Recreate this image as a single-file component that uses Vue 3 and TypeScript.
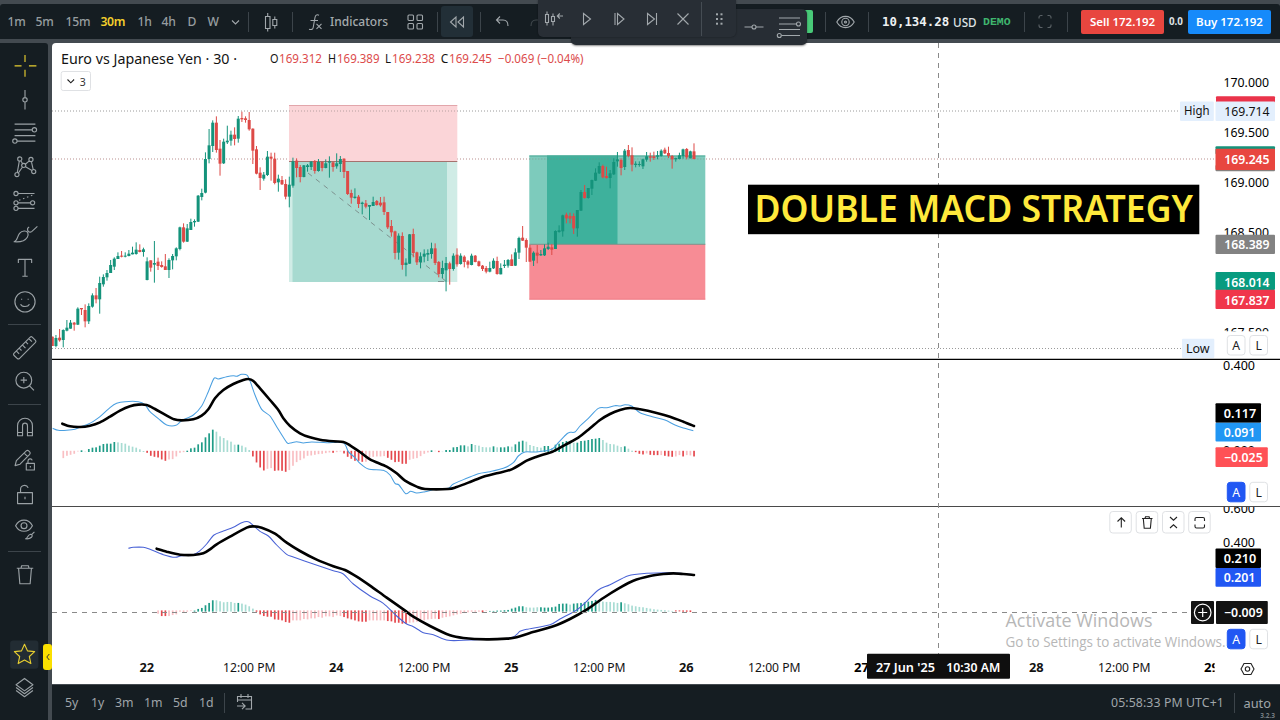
<script setup lang="ts">
type Pt = [number, number]
type Label = { t: string; x: number; y: number; w: number; s?: number; f?: string; b?: number }

// Chart data is stored in thirds of a pixel.
const U = 3
const step = 3.646
const x0 = 52.3
const barX = (i: number) => x0 + step * i

// direction, body top, body bottom, wick top, wick bottom
const rawCandles = `D740,768,740,768 U744,768,735,772 D743,751,717,755 U720,750,718,772 U713,722,690,724 U698,716,690,716 D698,704,696,722 U656,704,652,705 D654,658,654,675 D660,694,643,712
U648,694,640,702 U616,650,610,653 D616,628,594,640 U579,628,560,671 U561,583,553,590 U549,562,540,572 U525,549,510,549 U506,530,502,540 U498,507,487,507 D497,500,483,502
U497,500,487,502 U491,498,480,499 U488,493,470,493 U479,492,457,494 D480,486,463,487 U478,486,473,500 U514,570,502,571 D511,533,511,545 U519,524,453,578 D515,528,503,540
D525,531,514,533 D529,540,492,540 U510,540,505,564 U498,511,492,538 U475,499,472,511 U412,477,410,481 D412,455,400,458 U415,455,402,456 U396,420,386,420 U393,397,388,410
U317,395,315,396 U309,321,296,331 U207,308,187,310 U166,207,117,220 U98,168,91,186 D98,180,79,188 D176,221,150,257 U155,220,146,222 U152,157,107,162 U134,152,122,167
D134,147,112,166 U86,146,78,158 D84,88,65,96 D85,90,79,98 D90,118,66,122 D116,182,115,222 D178,251,168,253 D248,264,232,300 U254,266,246,272 U200,255,183,258
D200,206,188,272 D206,279,188,283 U266,277,254,305 D270,283,258,285 D282,320,268,328 U284,320,260,352 U214,287,203,293 D212,234,205,262 D231,261,225,277 U226,261,225,262
U226,231,222,245 U215,231,213,240 D213,243,210,251 U216,243,207,245 D216,234,215,244 U220,234,208,235 U214,218,199,263 D217,231,215,245 U220,229,190,236 U207,222,198,246
D206,246,205,264 D243,312,243,315 D309,323,299,341 U320,324,295,326 D320,342,315,354 U338,342,335,373 D340,350,330,355 U345,350,345,390 U336,348,320,348 D333,345,330,347
D338,346,321,350 D337,366,320,375 D366,412,366,417 D408,427,390,440 D424,489,422,508 U437,488,430,509 D438,525,427,539 U518,525,505,559 U433,521,432,522 D432,489,416,502
D487,517,485,525 U499,517,487,535 U491,500,478,517 U489,494,478,513 U475,492,458,506 D475,519,460,525 D516,552,513,562 U534,552,512,564 U519,541,501,604 D520,537,515,584
U497,537,490,542 D494,523,475,530 U497,522,490,524 D500,516,496,532 D514,524,510,535 U497,525,491,526 D497,516,495,517 D514,528,512,530 D527,537,525,543 D534,545,528,550
U534,545,515,547 U512,535,505,537 D513,552,500,554 U534,553,520,553 U524,528,510,534 U510,527,507,533 D508,528,493,528 U487,527,475,528 U444,488,440,507 D443,452,408,453
D450,473,445,516 D473,515,465,515 U488,512,484,528 D488,497,465,520 U492,496,480,498 U475,496,463,498 U470,477,458,480 D472,479,462,495 U423,477,421,477 U421,426,406,428
U376,424,374,440 D374,385,368,400 D378,386,368,400 D378,415,370,432 U360,415,360,440 U306,362,300,363 D306,324,285,326 U294,324,294,326 U270,296,269,315 U248,272,235,273
U228,250,217,252 D228,262,224,265 D258,264,230,266 U250,264,240,295 U216,253,205,255 U208,214,186,230 D210,234,205,256 U182,231,177,240 D180,198,165,202 D196,224,172,244
U221,225,214,232 U222,225,214,230 U208,229,206,237 U199,209,186,215 D199,203,188,215 D199,204,185,210 U196,200,183,208 U182,198,178,200 D179,190,173,192 D189,198,170,204
D198,208,195,236 U204,208,203,215 U196,207,188,208 U178,198,176,206 D177,202,174,208 U184,205,182,205 D184,207,160,208`
const candles = rawCandles.split(/\s+/).map((c, i) => {
  const [a, b, h, l] = c.slice(1).split(',').map((n) => 90 + Number(n) / U)
  return { x: barX(i), fill: c[0] === 'U' ? '#14937b' : '#dd4a47', a, b, h, l }
})

// Histogram bars: an asterisk marks a bar that extends the move (strong tint).
function histogram(first: number, base: number, raw: string) {
  return raw.split(/\s+/).map((s, k) => {
    const strong = s.endsWith('*')
    const v = parseInt(s) / U
    const fill = v >= 0 ? (strong ? '#1f9c87' : '#a8dcd3') : strong ? '#e5484d' : '#f9bfc3'
    return { x: barX(first + k), y: v >= 0 ? base + 0.6 - v : base - 0.6, h: Math.max(0.4, Math.abs(v)), fill }
  })
}
const hist1 = histogram(3, 451.4, `-22 -15 -12 -9 -2 5* 1 9* 13* 14* 19* 24* 25* 25* 30* 29 27 25 19 16 13 8 3 -6* -15* -18* -20* -26* -30* -26 -25 -17 -6 -4 4* 11* 13* 23* 29* 44* 56* 67* 61 47 42 35 31 22 22* 19 14 6 -17* -35* -50* -59* -54 -52 -60* -59* -60* -63* -58 -45 -34 -28 -23 -15 -14 -12 -10 -9 -7 -5 -6* -4 -2 -8* -18* -24* -30* -30* -33* -33 -20 -18 -17 -17 -16 -21* -27* -34* -33* -39* -39* -27 -24 -22 -16 -9 -5 5* -1 -4* 1 6* 6* 14* 15* 20* 20* 17 24* 21 19 15 14 14 17* 14 14* 14* 17* 16 23* 31* 34* 31 21 18 15 13 18* 18* 12 22* 25* 30* 33* 29 28 28* 33* 34* 36* 39* 40* 42* 36 28 24 23 19 15 17* 10 4 -4* -9* -11* -8 -12* -13* -13* -13 -15* -17* -18* -17 -13 -17* -13 -14 -17*`)
const hist2 = histogram(29, 611, `-10 -17* -17* -17 -14 -12 -4 -6 -4 -2 3* 8* 11* 19* 26* 34* 34 31 28 29 29 26 26* 24 21 16 9 -4* -12* -17* -19* -19* -27* -28* -30* -35* -37* -30 -30 -30 -26 -27 -24 -24 -20 -22 -18 -18 -20 -15 -17 -20* -24* -27* -30* -33* -34* -34* -30 -30 -30 -30 -30 -32* -33* -37* -37* -40* -40* -37 -36 -34 -32 -30 -27 -26 -25 -26* -22 -20 -18 -15 -12 -10 -8 -6 -4 -4 -4 -6* -2 2* 2* 3* 3* 4* 5* 9* 12* 16* 16* 13 12 12 13 13* 12* 12* 13* 15* 23* 24* 24* 21 24* 25* 26* 28* 30* 32* 35* 31 30 29 29 28 26 28* 25 22 18 16 14 13 11 9 7 6 5 4 3 2 -3* -3* -4* -4* -5*`)

const pts = (s: string): Pt[] => s.trim().split(/\s+/).map((p) => {
  const [a, b] = p.split(',').map(Number)
  return [50 + a / U, 360 + b / U] as Pt
})
function smooth(s: string) {
  const p = pts(s)
  let d = `M${p[0][0].toFixed(2)} ${p[0][1].toFixed(2)}`
  for (let i = 0; i < p.length - 1; i++) {
    const a = p[i - 1] ?? p[i], b = p[i], c = p[i + 1], e = p[i + 2] ?? c
    const k = 7
    d += `C${[b[0] + (c[0] - a[0]) / k, b[1] + (c[1] - a[1]) / k, c[0] - (e[0] - b[0]) / k, c[1] - (e[1] - b[1]) / k, c[0], c[1]].map((n) => n.toFixed(2)).join(' ')}`
  }
  return d
}
const fast1 = smooth('8,205 25,211 50,211 75,208 90,201 115,192 130,184 150,170 180,143 200,130 225,125 265,125 285,134 300,155 330,180 350,195 378,196 395,182 430,165 455,138 475,95 492,55 505,57 530,50 550,47 560,49 575,43 592,46 602,68 615,105 635,148 660,168 680,200 710,247 720,249 740,245 760,249 785,246 830,248 880,248 895,275 915,293 930,310 955,327 1000,331 1020,345 1035,370 1047,375 1067,401 1082,394 1100,399 1125,395 1160,387 1195,385 1210,372 1250,355 1285,341 1320,335 1360,325 1390,308 1405,288 1425,276 1460,276 1505,268 1525,248 1550,222 1560,217 1575,216 1590,198 1615,175 1645,145 1670,143 1695,137 1710,138 1725,134 1745,138 1770,158 1810,171 1845,180 1875,195 1900,204 1930,212')
const slow1 = smooth('37,191 60,199 90,201 120,197 150,187 180,170 210,152 240,139 265,134 290,135 315,147 345,164 372,178 395,181 430,178 455,167 475,148 495,115 520,90 550,72 580,60 595,57 610,63 630,85 660,120 685,150 700,175 720,198 750,220 780,232 810,239 850,244 880,246 900,256 930,276 960,298 1010,320 1040,340 1065,362 1100,380 1125,387 1195,387 1220,381 1260,366 1300,350 1340,340 1385,328 1430,302 1460,290 1510,274 1550,252 1585,233 1620,205 1650,180 1680,162 1710,150 1740,144 1770,148 1820,159 1860,170 1900,185 1932,198')
const fast2 = smooth('235,565 250,562 280,562 300,568 340,584 375,592 395,587 430,584 450,572 470,552 492,525 520,513 550,502 575,488 595,485 610,497 630,514 655,528 680,555 710,583 730,591 790,612 850,632 880,642 910,672 960,708 1000,730 1040,768 1070,792 1090,800 1120,818 1150,824 1195,841 1260,840 1380,834 1410,814 1430,808 1500,794 1530,777 1580,750 1610,724 1645,690 1680,674 1735,647 1790,640 1860,638 1900,641 1930,644')
const slow2 = smooth('320,566 350,575 390,584 430,585 460,580 480,568 500,553 540,530 590,503 610,499 635,503 675,521 710,548 750,573 800,599 850,619 885,630 920,650 960,677 1010,713 1060,748 1090,770 1140,798 1200,826 1240,834 1310,838 1370,836 1400,832 1440,819 1510,799 1560,777 1610,749 1660,714 1710,683 1750,662 1800,648 1840,642 1870,640 1900,642 1932,645')

const boxes = [
  { x: 1216, y: 96.3, w: 59, h: 8, c: '#ea334a' },
  { x: 1215.5, y: 101.5, w: 59.5, h: 19.5, c: '#e3effd' },
  { x: 1180, y: 101.5, w: 33.8, h: 19.5, c: '#e3effd' },
  { x: 1215.5, y: 146.3, w: 59.5, h: 8, c: '#14937b' },
  { x: 1215.5, y: 165, w: 59.5, h: 6.3, c: '#85807e' },
  { x: 1215.5, y: 148.7, w: 59.5, h: 21.3, c: '#e8463f' },
  { x: 1215.5, y: 234.7, w: 59.5, h: 19.3, c: '#828282' },
  { x: 1215.5, y: 272, w: 59.5, h: 18, c: '#079b7f' },
  { x: 1215.5, y: 289.7, w: 59.5, h: 19.3, c: '#f0364b' },
  { x: 1182, y: 338.7, w: 32.3, h: 19.3, c: '#e3effd' },
  { x: 1215.5, y: 403.3, w: 45.5, h: 19.4, c: '#000' },
  { x: 1215.5, y: 422.7, w: 45.5, h: 18.8, c: '#2196f3' },
  { x: 1215.5, y: 447.2, w: 52.3, h: 19.8, c: '#ff5156' },
  { x: 1215.5, y: 548.5, w: 45.5, h: 19.4, c: '#000' },
  { x: 1215.5, y: 567.9, w: 45.5, h: 18.8, c: '#2157f3' },
  { x: 1191, y: 601, w: 23, h: 23, c: '#131313' },
  { x: 1216, y: 601, w: 51.8, h: 23, c: '#131313' },
  { x: 867, y: 653.8, w: 143, h: 25, c: '#0f0f0f' },
]
const under: Label[] = [
  { t: '170.000', x: 1223.5, y: 87, w: 45.5 },
  { t: '169.500', x: 1223.5, y: 137, w: 45.5 },
  { t: '169.000', x: 1223.5, y: 187.3, w: 45.5 },
  { t: '168.500', x: 1223.5, y: 237, w: 45.5 },
  { t: '0.400', x: 1223, y: 370, w: 32 },
  { t: '0.000', x: 1223, y: 455, w: 32 },
  { t: '0.400', x: 1223, y: 547.3, w: 32 },
  { t: '27', x: 854, y: 672, w: 15, b: 700 },
]
const labels: Label[] = [
  { t: 'High', x: 1184, y: 114.7, w: 25.5 },
  { t: 'Low', x: 1186, y: 353.3, w: 23.7 },
  { t: '169.714', x: 1224.3, y: 116.3, w: 45.3 },
  { t: '169.245', x: 1224.3, y: 164, w: 45.3, f: '#fff', b: 600 },
  { t: '168.389', x: 1224.3, y: 249.3, w: 45.3, f: '#fff', b: 600 },
  { t: '168.014', x: 1224.3, y: 286.7, w: 45.3, f: '#fff', b: 600 },
  { t: '167.837', x: 1224.3, y: 304.7, w: 45.3, f: '#fff', b: 600 },
  { t: '0.117', x: 1223.7, y: 418, w: 32.5, f: '#fff', b: 600 },
  { t: '0.091', x: 1223.7, y: 437, w: 31.7, f: '#fff', b: 600 },
  { t: '−0.025', x: 1224, y: 462, w: 38.7, f: '#fff', b: 600 },
  { t: '0.210', x: 1223.7, y: 563.3, w: 32.5, f: '#fff', b: 600 },
  { t: '0.201', x: 1223.7, y: 582, w: 31.7, f: '#fff', b: 600 },
  { t: '−0.009', x: 1224, y: 617.3, w: 38.7, f: '#fff', b: 600 },
  { t: '22', x: 139.5, y: 672, w: 14.7, b: 700 },
  { t: '12:00 PM', x: 223, y: 672, w: 52.5 },
  { t: '24', x: 329, y: 672, w: 14.7, b: 700 },
  { t: '12:00 PM', x: 398, y: 672, w: 52.5 },
  { t: '25', x: 504, y: 672, w: 14.7, b: 700 },
  { t: '12:00 PM', x: 573, y: 672, w: 52.5 },
  { t: '26', x: 679, y: 672, w: 14.7, b: 700 },
  { t: '12:00 PM', x: 748, y: 672, w: 52.5 },
  { t: "27 Jun '25", x: 876, y: 672, w: 59, f: '#fff', b: 600 },
  { t: '10:30 AM', x: 946.3, y: 672, w: 54, f: '#fff', b: 600 },
  { t: '28', x: 1029, y: 672, w: 14.7, b: 700 },
  { t: '12:00 PM', x: 1098, y: 672, w: 52.5 },
  { t: 'Euro vs Japanese Yen · 30 ·', x: 61, y: 63.7, w: 176, s: 14.2 },
  { t: 'O', x: 270, y: 63.3, w: 8.5 },
  { t: '169.312', x: 279, y: 63.3, w: 43, f: '#dc4b4b' },
  { t: 'H', x: 328, y: 63.3, w: 8 },
  { t: '169.389', x: 337, y: 63.3, w: 42.5, f: '#dc4b4b' },
  { t: 'L', x: 385, y: 63.3, w: 6 },
  { t: '169.238', x: 392, y: 63.3, w: 43, f: '#dc4b4b' },
  { t: 'C', x: 440.7, y: 63.3, w: 7.5 },
  { t: '169.245', x: 449, y: 63.3, w: 43, f: '#dc4b4b' },
  { t: '−0.069 (−0.04%)', x: 498, y: 63.3, w: 85.5, f: '#dc4b4b' },
  { t: '3', x: 79.7, y: 85.5, w: 6, s: 11.5, f: '#333' },
]
const scaleKeys = [
  { y: 335.5, on: false },
  { y: 482.3, on: true },
  { y: 629.3, on: true },
]

const frames = ['1m', '5m', '15m', '30m', '1h', '4h', 'D', 'W']
const ranges = ['5y', '1y', '3m', '1m', '5d', '1d']

// Left rail: each glyph is drawn on a 34-unit grid.
const rail: { d?: string; cls?: string; sep?: boolean }[] = [
  { cls: 'gold', d: 'M17 6v7M17 21v7M6.5 17h7M21 17h7.5' },
  { d: 'M17 7v7.8M17 19.2v7.5M14.8 17a2.2 2.2 0 1 0 4.4 0a2.2 2.2 0 1 0-4.4 0' },
  { d: 'M6.5 8.2h21M6.5 14h17.8M24.3 14a2.2 2.2 0 1 0 4.4 0a2.2 2.2 0 1 0-4.4 0M6.5 19.8h21M9 25.3h18.5M4.6 25.3a2.2 2.2 0 1 0 4.4 0a2.2 2.2 0 1 0-4.4 0' },
  { d: 'M9.6 9a2.1 2.1 0 1 0 4.2 0a2.1 2.1 0 1 0-4.2 0M20.9 9.6a2.1 2.1 0 1 0 4.2 0a2.1 2.1 0 1 0-4.2 0M23.7 21.8a2.1 2.1 0 1 0 4.2 0a2.1 2.1 0 1 0-4.2 0M6.8 24.8a2.1 2.1 0 1 0 4.2 0a2.1 2.1 0 1 0-4.2 0M13.6 15.6a2.1 2.1 0 1 0 4.2 0a2.1 2.1 0 1 0-4.2 0M11.3 11L9.2 22.7M12.7 10.8L14.7 13.9M17.5 16.8L24 20.6M23.4 11.6L25.3 19.8M21.4 11L17.3 14.4M14.3 17.4L10.3 23.2' },
  { d: 'M5.8 9.6a2.1 2.1 0 1 0 4.2 0a2.1 2.1 0 1 0-4.2 0M10 9.6h16.6M5.8 19a2.1 2.1 0 1 0 4.2 0a2.1 2.1 0 1 0-4.2 0M10 19h12.6M22.6 19a2.1 2.1 0 1 0 4.2 0a2.1 2.1 0 1 0-4.2 0M5.8 24.6a2.1 2.1 0 1 0 4.2 0a2.1 2.1 0 1 0-4.2 0M10 24.6h16.6M11 16.4l1.4-.5M15 14.9l1.4-.5M19 13.4l1.4-.5M23 11.9l1.4-.5' },
  { d: 'M6 25c3.500-.8 3-5.500 5.500-8.500c2.500-3 7-3.200 8.300-.6c1.300 3-1 6.300-4.500 8c-3 1.300-6 1.400-9.300 1.100zM29.500 9.500l-5.500 5c-1.800 1.400-4 .6-4.400-1.200c-.3-1.500.5-2.800 1.600-3.300' },
  { d: 'M10.300 12V8.500h13.400V12M17 8.500v17M14.300 25.500h5.400' },
  { d: 'M6.800 17a10.200 10.200 0 1 0 20.400 0a10.200 10.200 0 1 0-20.400 0M13.600 14v1M20.200 14v1M12.500 19.500c1.500 3 7.500 3 9 0' },
  { sep: true },
  { d: 'M5.800 22.500L22.300 6.200q1-.9 2 0l3.300 3.300q.9 1 0 2L11.300 27.800q-1 .9-2 0l-3.500-3.300q-.8-1 0-2zM11.300 17.500l2.200 2.200M14.500 14.300l3 3M17.800 11l2.200 2.200M21 7.800l3 3M8.400 20.400l2.700 2.700' },
  { d: 'M7.800 15.300a8 8 0 1 0 16 0a8 8 0 1 0-16 0M21.600 21.100l4.400 4.600M12.600 15.300h6.400M15.800 12.100v6.400' },
  { sep: true },
  { d: 'M9.500 25V14.800a7.500 7.500 0 0 1 15 0V25h-5V14.800a2.500 2.500 0 0 0-5 0V25zM9.500 21.700h5M19.500 21.700h5' },
  { d: 'M7 21.800l1.300-5L18.300 7q1.200-1 2.400 0l1 1q1.200 1.200 0 2.500L12 20.400zM16.200 9.200l3.500 3.500M18.300 19.500h8.200v6.700h-8.200zM20 19.500v-2.300a2.200 2.200 0 0 1 4.300-.6M22.400 22.200v1.400' },
  { d: 'M9.500 14.800h15v11h-15zM12.500 14.800v-3.300a4 4 0 0 1 7.700-1.500M17 19v2.500' },
  { d: 'M7.500 13.800c4-7.500 13-7.500 17 0c-4 7.500-13 7.500-17 0zM13 13.800a3 3 0 1 0 6 0a3 3 0 1 0-6 0M17.500 27c2 0 2-4 5-4.500c2 0 2.200 1.700 1 3c-1.400 1.400-3.800 1.800-6 1.500zM26.500 20l-2.600 2.500' },
  { sep: true },
  { d: 'M8.700 10.300h16.600M13 10.300l.6-2.500h6.800l.6 2.500M10.500 10.300l1.300 15.700h10.400l1.300-15.700' },
  { sep: true, cls: 'fill' },
  { cls: 'gold box', d: 'M16.500 6.300l3 6.700l7.200.8l-5.300 4.900l1.500 7.100l-6.400-3.600l-6.400 3.600l1.500-7.100l-5.300-4.900l7.200-.8z' },
  { d: 'M16.500 7.500l8.500 6.300L16.500 20.100l-8.500-6.300zM8 16.700l8.500 6.300l8.500-6.300M8 19.700l8.500 6.300l8.500-6.300' },
]
</script>

<template>
  <div class="app">
    <header class="top">
      <span v-for="f in frames" :key="f" class="tf" :class="{ active: f === '30m' }">{{ f }}</span>
      <svg class="ic" width="10" height="10"><path d="M1 3.500l3.500 3.500L8 3.500" /></svg>
      <i class="sep"></i>
      <svg class="ic" width="16" height="20"><path d="M1.500 4.500h4.500v12H1.500zM3.700 1v3.500M3.700 16.500v3M8.800 7.500h4v6h-4zM10.800 4.500v3M10.800 13.500v3" /></svg>
      <i class="sep"></i>
      <svg class="ic" width="16" height="20"><path d="M11 3.300c-2.300-1.200-3.600 0-4 2.200L5.200 15.500c-.4 2-1.700 2.400-4.200 1.700M2.500 8.500h7.500M8.500 11.800l5 5M13.500 11.800l-5 5" /></svg>
      <span class="ind">Indicators</span>
      <svg class="ic" width="18" height="18"><rect x="1" y="2" width="5.500" height="5.500" rx="1" /><rect x="10" y="2" width="5.500" height="5.500" rx="1" /><rect x="1" y="10.500" width="5.500" height="5.500" rx="1" /><rect x="10" y="10.500" width="5.500" height="5.500" rx="1" /></svg>
      <i class="sep"></i>
      <span class="replay"><svg class="ic" width="16" height="14"><path d="M7 2v10L1.500 7zM14.500 2v10L9 7z" /></svg></span>
      <i class="sep"></i>
      <svg class="ic" width="16" height="14"><path d="M5 1.500L1.500 5L5 8.500M1.500 5H8c3.500 0 5 2 5 6" /></svg>
      <svg class="ic dim" width="16" height="14"><path d="M0 11c0-4 2-6 5-6h4" /></svg>
      <b class="green"></b>
      <i class="sep"></i>
      <svg class="ic" width="20" height="16"><path d="M.8 8c4.200-7.500 13.200-7.500 17.400 0c-4.200 7.500-13.200 7.500-17.400 0z" /><circle cx="9.500" cy="8" r="3.700" /><circle cx="9.500" cy="8" r="1" /></svg>
      <i class="sep"></i>
      <span class="bal">10,134.28</span>
      <span class="usd">USD</span>
      <span class="demo">DEMO</span>
      <i class="sep"></i>
      <svg class="ic dim2" width="16" height="16"><path d="M1 4.500V3.500q0-2 2-2h1.500M9.500 1.500H11q2 0 2 2v1M13 10.500v1q0 2-2 2H9.500M4.500 13.500H3q-2 0-2-2v-1" /></svg>
      <i class="sep"></i>
      <span class="trade sell">Sell 172.192</span>
      <span class="spread">0.0</span>
      <span class="trade buy">Buy 172.192</span>
    </header>

    <nav class="rail">
      <template v-for="(r, i) in rail" :key="i">
        <i v-if="r.sep" class="rule" :class="r.cls"></i>
        <svg v-else class="tool" :class="r.cls" viewBox="0 0 34 34"><rect v-if="r.cls === 'gold box'" x="2" y="2.500" width="28.500" height="28.500" rx="3" class="plate" /><path :d="r.d" /></svg>
      </template>
    </nav>

    <main class="chart">
      <svg class="canvas" viewBox="52 43 1228 641">
        <defs>
          <clipPath id="low"><rect x="1216" y="320" width="60" height="11.300" /></clipPath>
          <clipPath id="pane2"><rect x="1216" y="507" width="60" height="30" /></clipPath>
          <clipPath id="axis"><rect x="1190" y="655" width="24.600" height="25" /></clipPath>
        </defs>

        <g class="dots">
          <path d="M52 111H1180M52 348.500H1182" />
          <path class="last" d="M52 159H1215" />
        </g>

        <g>
          <rect x="289" y="105.500" width="168.300" height="56" fill="#fbd5d8" />
          <rect x="289" y="161.500" width="168.300" height="120.500" fill="#d0ece6" />
          <rect x="292.500" y="161.500" width="154.500" height="120.500" fill="#a7dad0" />
          <path d="M289 105.500H457.300" stroke="#e2a6ab" />
          <path d="M289 161.500H457.300" stroke="#a5726e" />
          <path d="M308 173L447 282" stroke="#7d928f" stroke-dasharray="5 5" />
          <path d="M438 281.500h6" stroke="#7d928f" />
          <rect x="529.300" y="155.500" width="176" height="89" fill="#7dcbbc" />
          <rect x="547" y="155.500" width="70.500" height="89" fill="#3eb19c" />
          <rect x="529.300" y="244.300" width="176" height="55.200" fill="#f78c95" />
          <path d="M529.300 156H705.300" stroke="#4fa896" />
          <path d="M529.300 244.300H705.300" stroke="#7f8f88" />
          <path d="M529.300 299.200H705.300" stroke="#ee7680" stroke-width=".8" />
          <path class="in" d="M289 111H457.300M529.300 159H705.300" />
        </g>

        <g v-for="(c, i) in candles" :key="i" :fill="c.fill">
          <rect :x="c.x - 0.5" :y="c.h" width="1" :height="c.l - c.h" />
          <rect :x="c.x - 1.5" :y="c.a" width="3" :height="Math.max(1, c.b - c.a)" />
        </g>

        <rect v-for="(h, i) in hist1" :key="'a' + i" :x="h.x - 0.8" :y="h.y" width="1.700" :height="h.h" :fill="h.fill" />
        <rect v-for="(h, i) in hist2" :key="'b' + i" :x="h.x - 0.8" :y="h.y" width="1.700" :height="h.h" :fill="h.fill" />
        <path class="fast one" :d="fast1" />
        <path class="slow" :d="slow1" />
        <path class="fast two" :d="fast2" />
        <path class="slow" :d="slow2" />

        <path d="M52 359.400H1280" stroke="#000" stroke-width="1.100" />
        <path d="M52 506.500H1280" stroke="#4a4a4a" />
        <path d="M52 612.500H1191" class="cross" />
        <path d="M938.500 43V654" class="cross" />

        <rect x="748" y="184.700" width="451.300" height="49.500" />
        <text x="754.500" y="222.300" class="banner" textLength="438.500" lengthAdjust="spacingAndGlyphs">DOUBLE MACD STRATEGY</text>

        <g class="mark">
          <text x="1005.500" y="627" font-size="18" textLength="147" lengthAdjust="spacingAndGlyphs">Activate Windows</text>
          <text x="1005.500" y="647" font-size="13.800" textLength="220" lengthAdjust="spacingAndGlyphs">Go to Settings to activate Windows.</text>
        </g>

        <text v-for="(l, i) in under" :key="'u' + i" :x="l.x" :y="l.y" :textLength="l.w" lengthAdjust="spacingAndGlyphs" :font-weight="l.b ?? 400">{{ l.t }}</text>
        <text x="1223.500" y="337" textLength="45.500" lengthAdjust="spacingAndGlyphs" clip-path="url(#low)">167.500</text>
        <text x="1223" y="513" textLength="32" lengthAdjust="spacingAndGlyphs" clip-path="url(#pane2)">0.600</text>
        <text x="1204" y="672" textLength="15" lengthAdjust="spacingAndGlyphs" font-weight="700" clip-path="url(#axis)">29</text>

        <rect v-for="(b, i) in boxes" :key="'x' + i" :x="b.x" :y="b.y" :width="b.w" :height="b.h" :fill="b.c" rx="1" />
        <rect x="61.200" y="71.500" width="29.300" height="19" rx="2" class="key" />
        <path d="M67.500 79.500l3.300 3.300l3.300-3.300" class="glyph" />
        <text v-for="(l, i) in labels" :key="'l' + i" :x="l.x" :y="l.y" :textLength="l.w" lengthAdjust="spacingAndGlyphs" :font-size="l.s ?? 12.2" :fill="l.f ?? '#131313'" :font-weight="l.b ?? 400">{{ l.t }}</text>

        <g v-for="k in scaleKeys" :key="k.y" text-anchor="middle">
          <rect x="1227.300" :y="k.y" width="17.700" height="19.500" rx="3" class="key" :class="{ on: k.on }" />
          <rect x="1249.800" :y="k.y" width="17.700" height="19.500" rx="3" class="key" />
          <text x="1236.100" :y="k.y + 14.300" :fill="k.on ? '#fff' : '#222'">A</text>
          <text x="1258.600" :y="k.y + 14.300" fill="#222">L</text>
        </g>

        <rect v-for="x in [1109.8, 1136.2, 1162.5, 1188.7]" :key="x" :x="x" y="511.500" width="21.500" height="21.500" rx="3" class="key" />
        <g class="glyph">
          <path d="M1121.300 527.500v-9.500M1117.500 521.500l3.800-3.700l3.800 3.700" />
          <path d="M1142 518.500h10.500M1145 518.500l.5-1.700h3.600l.5 1.700M1143.300 518.500l.9 9.800h6.200l.9-9.800" />
          <path d="M1170 517l3.500 3.200l3.500-3.200M1170 528l3.500-3.200l3.500 3.200" />
          <path d="M1195 521v-2q0-1.500 1.500-1.500h6.500q1.500 0 1.500 1.500v2M1195 524.500v2q0 1.500 1.500 1.500h6.500q1.500 0 1.500-1.500v-2" />
          <path d="M1241 669l3-5.500h7l3 5.500l-3 5.500h-7z" />
          <circle cx="1247.500" cy="669" r="2.200" />
        </g>
        <g fill="none" stroke="#fff" stroke-width="1.200">
          <circle cx="1202.700" cy="612.500" r="8.300" />
          <path d="M1198.200 612.500h9M1202.700 608v9" />
        </g>
      </svg>
    </main>

    <footer class="bottom">
      <span v-for="r in ranges" :key="r">{{ r }}</span>
      <i class="sep"></i>
      <svg class="ic" width="20" height="20"><path d="M1.500 9V3.500h14V16H9.500M1.500 7h14M5 1v4M12 1v4M1 13h8M6 9.800l3.200 3.200L6 16.200" /></svg>
      <span class="clock">05:58:33 PM UTC+1</span>
      <i class="sep"></i>
      <span class="auto">auto</span>
      <small>3.2.3</small>
    </footer>

    <div class="handle"><svg width="6" height="8"><path d="M4.300 1L1.800 4l2.500 3" /></svg></div>

    <div class="float back">
      <svg class="ic" width="22" height="12"><path d="M.5 6h7.500M12 6h7.500" /><circle cx="10" cy="6" r="2" /></svg>
      <svg class="ic" width="26" height="24"><path d="M3 3h21M3 9h17.500M3 14.500h21M5.500 20.500H24" /><circle cx="22.500" cy="9" r="2" /><circle cx="3.300" cy="20.500" r="2" /></svg>
    </div>
    <div class="float front">
      <svg class="ic" width="22" height="18"><path d="M1.500 4.500h3v8h-3zM3 1.500v3M3 12.500v3M7.500 6.500h3v5h-3zM9 3.500v3M9 11.500v4M19 6h-5.500M15.800 3.500L13.300 6l2.500 2.500" /></svg>
      <svg class="ic" width="16" height="16"><path d="M2.500 2.500v11l7-5.500z" /></svg>
      <svg class="ic" width="16" height="16"><path d="M2 2v12M4.500 2.500v11l6.500-5.500z" /></svg>
      <svg class="ic" width="16" height="16"><path d="M2.500 2.500v11l7-5.500zM11.500 2v12" /></svg>
      <svg class="ic" width="16" height="16"><path d="M2.500 2.500l11 11M13.500 2.500l-11 11" /></svg>
      <i></i>
      <svg class="grip" width="12" height="14"><g v-for="y in [2.300, 7, 11.700]" :key="y"><rect v-for="x in [1, 5.500]" :key="x" :x="x" :y="y - 1" width="2" height="2" /></g></svg>
    </div>
  </div>
</template>

<style>
body { margin: 0; background: #434a50; overflow: hidden; }
</style>

<style scoped>
.app {
  position: relative;
  width: 1280px;
  height: 720px;
  overflow: hidden;
  display: grid;
  grid-template: 39px 641px 36px / 48px 1228px;
  grid-template-areas: 'top top' 'rail chart' 'rail bottom';
  column-gap: 4px;
  padding-top: 4px;
  box-sizing: border-box;
  background: #434a50;
  font-family: 'Noto Sans', 'Open Sans', sans-serif;
  font-size: 12.500px;
  color: #969c9f;
  white-space: nowrap;
}
.top {
  grid-area: top;
  height: 35px;
  box-sizing: border-box;
  background: #151d22;
  border-radius: 3px 3px 0 0;
  padding-left: 8px;
  display: grid;
  align-items: center;
  justify-items: start;
  grid-template-columns: 28px 30px 35px 37px 24px 26px 20px 23px 17px 16px 28px 16px 22px 77px 30px 4px 39px 15px 36px 274px 20px 11px 32px 14px 71px 30px 41px 14px 29px 14px 88px 19px 83px;
}
.tf, .ind { font-weight: 500; font-size: 12.200px; }
.tf { margin-left: -.5px; letter-spacing: -.2px; }
.ind { font-size: 12px; color: #a5abae; }
.tf.active { color: #f3cf2c; font-weight: 600; letter-spacing: -.4px; }
.sep { width: 1px; height: 20px; background: #3c444a; }
.ic { fill: none; stroke: #a2a8ac; stroke-width: 1.100; display: block; overflow: visible; }
.dim { opacity: .3; }
.dim2 { opacity: .5; }
.replay { width: 32px; height: 31px; background: #222f37; border-radius: 3px; display: flex; align-items: center; justify-content: center; }
.green { width: 8px; height: 23px; background: #48ca78; border-radius: 0 2px 2px 0; }
.bal { font: 700 12.400px 'DejaVu Sans Mono', monospace; color: #eef1f2; }
.usd { font-size: 11.700px; font-weight: 500; color: #dfe3e5; }
.demo { font: 700 11.500px 'Liberation Mono', monospace; color: #3fb56e; }
.trade { width: 83px; height: 24px; border-radius: 2px; color: #fff; font-weight: 600; font-size: 11.500px; display: flex; align-items: center; justify-content: center; }
.sell { background: #e8463f; }
.buy { background: #168afa; }
.spread { font-size: 9.800px; font-weight: 700; color: #dfe3e5; }
.rail {
  grid-area: rail;
  background: #151d22;
  border-radius: 0 3px 0 0;
  display: flex;
  flex-direction: column;
  align-items: center;
  padding: 6px 0 15px 1px;
  box-sizing: border-box;
}
.tool { width: 34px; height: 33.700px; flex: none; fill: none; stroke: #9aa1a5; stroke-width: 1.150; stroke-linejoin: round; }
.gold { stroke: #e8cf30; }
.plate { fill: #222c33; stroke: none; }
.rule { width: 33px; height: 1px; flex: none; margin: 5.700px 0; background: #3c444a; }
.rule.fill { flex: 1; margin: 0; background: none; }
.chart { grid-area: chart; background: #fff; border-radius: 4px 0 0 0; overflow: hidden; }
.canvas { display: block; width: 1228px; height: 641px; font-size: 12.200px; }
.dots path { stroke: #9a9a9a; stroke-dasharray: 1 2; fill: none; }
.dots .last { stroke: #b98f8e; }
.in { stroke: #8c7f7f; stroke-dasharray: 1 2; opacity: .6; }
.cross { stroke: #8a8a8a; stroke-dasharray: 5 5; }
.fast { fill: none; stroke-width: 1.050; }
.one { stroke: #4a9fe0; }
.two { stroke: #4a63d6; }
.slow { fill: none; stroke: #000; stroke-width: 2.600; stroke-linecap: round; stroke-linejoin: round; }
.banner { font-size: 37px; font-weight: 600; fill: #ffe93c; }
.mark { fill: #b7b7b7; font-family: 'Open Sans', 'Noto Sans', sans-serif; }
.key { fill: #fff; stroke: #dfe1e4; }
.key.on { fill: #2157f3; stroke: #2157f3; }
.glyph { fill: none; stroke: #222; stroke-width: 1.100; }
.bottom {
  grid-area: bottom;
  position: relative;
  background: #151d22;
  border-top: 1px solid #434a50;
  box-sizing: border-box;
  padding-left: 13px;
  display: grid;
  align-items: center;
  grid-template-columns: 26px 24px 29px 29px 26px 25px 12px 875px 123px 9px 40px;
  font-size: 12.300px;
  color: #a0a6aa;
}
.clock { letter-spacing: .1px; }
.auto { margin-left: .5px; font-size: 12.800px; }
.bottom small { position: absolute; right: 5px; bottom: 0; font-size: 6.500px; line-height: 9px; font-weight: 700; color: #777f84; }
.handle {
  position: absolute; left: 43px; top: 644px; width: 9px; height: 26px;
  background: #fbe000; border-radius: 3px; display: flex; align-items: center; justify-content: center;
}
.handle svg { fill: none; stroke: #333; }
.float { position: absolute; background: #272d34; display: flex; align-items: center; box-sizing: border-box; }
.back { left: 571px; top: 9px; width: 236px; height: 36px; border-radius: 5px; padding-left: 172.500px; gap: 10px; box-shadow: 0 1px 2px #0007; }
.front { left: 538px; top: 0; width: 198px; height: 37px; border-radius: 0 0 5px 5px; padding-left: 6px; background: #282e35; box-shadow: 0 0 2px #0006; }
.front .ic:nth-child(1) { margin-right: 15px; }
.front .ic:nth-child(2) { margin-right: 16px; }
.front .ic:nth-child(3) { margin-right: 16px; }
.front .ic:nth-child(4) { margin-right: 14px; }
.front i { width: 1px; height: 34px; background: #454c53; margin: 0 13px 0 10px; }
.grip rect { fill: #a2a8ac; }
</style>
